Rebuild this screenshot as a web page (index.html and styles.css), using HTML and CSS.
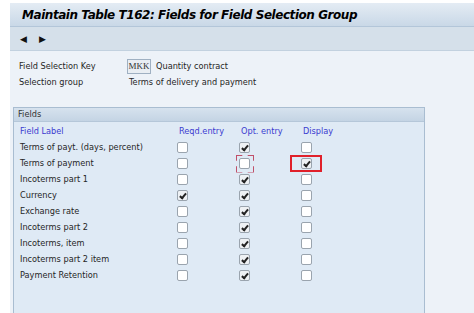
FILE: index.html
```html
<!DOCTYPE html>
<html lang="en">
<head>
    <meta charset="utf-8">
    <title>Maintain Table T162</title>
    <link rel="stylesheet" href="styles.css">
</head>
<body>
    <div class="window">
        <div class="titlebar">
            <h1>Maintain Table T162: Fields for Field Selection Group</h1>
        </div>
        <div class="toolbar">
            <span class="arrow">&#9664;</span>
            <span class="arrow">&#9654;</span>
        </div>

        <div class="content">
            <div class="info-row">
                <span class="info-label">Field Selection Key</span>
                <span class="key-box">MKK</span>
                <span>Quantity contract</span>
            </div>
            <div class="info-row">
                <span class="info-label">Selection group</span>
                <span class="info-value">Terms of delivery and payment</span>
            </div>

            <div class="group">
                <div class="group-title">Fields</div>
                <div class="field-table">
                    <div class="col-head">Field Label</div>
                    <div class="col-head">Reqd.entry</div>
                    <div class="col-head">Opt. entry</div>
                    <div class="col-head">Display</div>

                    <div>Terms of payt. (days, percent)</div>
                    <div><span class="cb"></span></div>
                    <div><span class="cb on"></span></div>
                    <div><span class="cb"></span></div>

                    <div>Terms of payment</div>
                    <div><span class="cb"></span></div>
                    <div><span class="cb focus"></span></div>
                    <div><span class="cb on marked"></span></div>

                    <div>Incoterms part 1</div>
                    <div><span class="cb"></span></div>
                    <div><span class="cb on"></span></div>
                    <div><span class="cb"></span></div>

                    <div>Currency</div>
                    <div><span class="cb on"></span></div>
                    <div><span class="cb on"></span></div>
                    <div><span class="cb"></span></div>

                    <div>Exchange rate</div>
                    <div><span class="cb"></span></div>
                    <div><span class="cb on"></span></div>
                    <div><span class="cb"></span></div>

                    <div>Incoterms part 2</div>
                    <div><span class="cb"></span></div>
                    <div><span class="cb on"></span></div>
                    <div><span class="cb"></span></div>

                    <div>Incoterms, item</div>
                    <div><span class="cb"></span></div>
                    <div><span class="cb on"></span></div>
                    <div><span class="cb"></span></div>

                    <div>Incoterms part 2 item</div>
                    <div><span class="cb"></span></div>
                    <div><span class="cb on"></span></div>
                    <div><span class="cb"></span></div>

                    <div>Payment Retention</div>
                    <div><span class="cb"></span></div>
                    <div><span class="cb on"></span></div>
                    <div><span class="cb"></span></div>
                </div>
            </div>
        </div>
    </div>
</body>
</html>
```
FILE: styles.css
```css
body {
    margin: 0;
    background: #fff;
    font-family: "DejaVu Sans", Verdana, sans-serif;
    font-size: 8.2px;
    color: #262626;
}
.window {
    margin: 3px 0 0 10px;
    background: #edf2f8;
    height: 310px;
    overflow: hidden;
}
.titlebar {
    height: 23px;
    background: linear-gradient(#e4ecf4, #c9d8e7);
    border-bottom: 1px solid #b3c6d9;
    display: flex;
    align-items: center;
    padding-left: 12px;
}
.titlebar h1 {
    margin: 0;
    font-size: 12px;
    font-weight: bold;
    font-style: italic;
    letter-spacing: -0.45px;
    color: #000;
}
.toolbar {
    height: 23px;
    background: #d5e0ea;
    border-bottom: 1px solid #c2d1df;
    display: flex;
    align-items: center;
    gap: 12px;
    padding-left: 10px;
}
.arrow {
    font-size: 9px;
    color: #111;
}
.content {
    padding: 7px 0 0 9px;
}
.info-row {
    display: flex;
    align-items: center;
    height: 16px;
}
.info-label {
    width: 108px;
}
.info-value {
    margin-left: 2px;
}
.key-box {
    width: 22px;
    height: 13px;
    border: 1px solid #9fb0c2;
    background: #e9eef3;
    font-family: "Liberation Serif", serif;
    font-size: 9px;
    line-height: 13px;
    text-align: center;
    margin-right: 5px;
    color: #333;
}
.group {
    margin: 17px 0 0 -6px;
    width: 410px;
    height: 220px;
    border: 1px solid #a9bdd1;
    background: #dfeaf5;
}
.group-title {
    height: 13px;
    line-height: 13px;
    background: linear-gradient(#d6e2ee, #c4d4e4);
    border-bottom: 1px solid #b5c7d9;
    padding-left: 4px;
    color: #333;
}
.field-table {
    display: grid;
    grid-template-columns: 157px 62px 62px 1fr;
    grid-auto-rows: 16px;
    align-items: center;
    padding: 1px 0 0 6px;
}
.col-head {
    color: #3b3bd0;
    padding-left: 2px;
}
.col-head:first-child {
    padding-left: 0;
}
.cb {
    display: block;
    position: relative;
    width: 9px;
    height: 9px;
    border: 1px solid #9aa4ae;
    border-radius: 2px;
    background: #fff;
}
.cb.on {
    background: #eef1f4;
}
.cb.on::after {
    content: "";
    position: absolute;
    left: 3px;
    top: 1px;
    width: 2px;
    height: 5px;
    border: solid #222;
    border-width: 0 2px 2px 0;
    transform: rotate(40deg);
}
.cb.focus::before {
    content: "";
    position: absolute;
    left: -4px;
    top: -4px;
    width: 16px;
    height: 16px;
    border: 1px solid #c0506a;
    clip-path: polygon(0 0, 35% 0, 35% 100%, 65% 100%, 65% 0, 100% 0, 100% 35%, 0 35%, 0 65%, 100% 65%, 100% 100%, 0 100%);
}
.cb.marked::before {
    content: "";
    position: absolute;
    left: -12px;
    top: -4px;
    width: 28px;
    height: 13px;
    border: 2px solid #e0202a;
}
```
